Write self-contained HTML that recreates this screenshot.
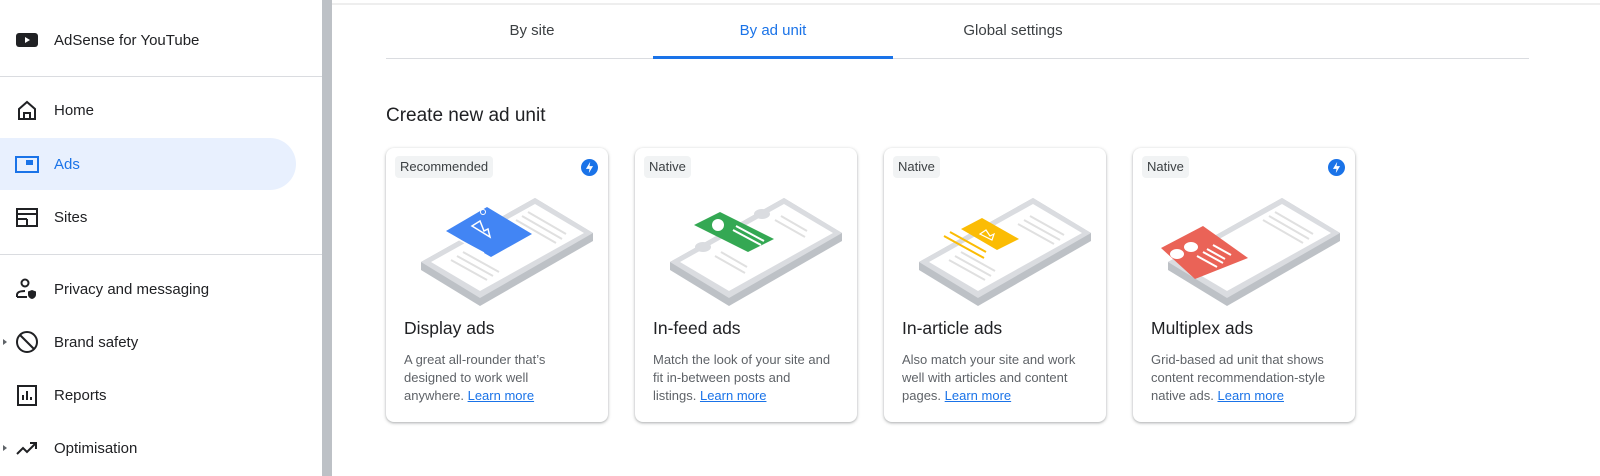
<!DOCTYPE html>
<html><head><meta charset="utf-8"><style>
*{margin:0;padding:0;box-sizing:border-box}
body{width:1600px;height:476px;overflow:hidden;background:#fff;font-family:"Liberation Sans",Arial,sans-serif;color:#202124;position:relative}
.side{position:absolute;left:0;top:0;width:322px;height:476px;background:#fff}
.bar{position:absolute;left:322px;top:0;width:10px;height:476px;background:#bdc1c6}
.item{position:absolute;left:0;height:52px;width:296px;display:flex;align-items:center;font-size:15px;color:#202124}
.item .ic{position:absolute;left:15px;top:50%;transform:translateY(-50%);width:24px;height:24px}
.item span{position:absolute;left:54px}
.sel{background:#e8f0fe;border-radius:0 26px 26px 0;color:#1a73e8}
.hr{position:absolute;left:0;width:322px;height:1px;background:#dadce0}
.arrow{position:absolute;left:3px;width:0;height:0;border-top:3px solid transparent;border-bottom:3px solid transparent;border-left:4px solid #5f6368}
.topline{position:absolute;left:332px;right:0;top:3px;height:2px;background:#eeeeee}
.tabs{position:absolute;left:386px;width:1143px;top:58px;height:1px;background:#dadce0}
.tab{position:absolute;top:22px;font-size:15px;color:#3c4043;width:240px;text-align:center}
.ink{position:absolute;left:653px;top:56px;width:240px;height:3px;background:#1a73e8}
h2{position:absolute;left:386px;top:105px;font-size:19px;font-weight:400;color:#202124}
.card{position:absolute;top:148px;width:222px;height:274px;border-radius:8px;background:#fff;box-shadow:0 1px 2px rgba(60,64,67,.3),0 1px 3px 1px rgba(60,64,67,.12)}
.chip{position:absolute;left:9px;top:8px;height:22px;padding:0 5px;background:#f1f3f4;border-radius:4px;font-size:13px;line-height:22px;color:#3c4043}
.bolt{position:absolute;right:10px;top:11px;width:17px;height:17px}
.card svg.ill{position:absolute;left:0;top:40px}
.t{position:absolute;left:18px;top:170px;font-size:17.5px;color:#202124}
.d{position:absolute;left:18px;top:203px;width:182px;font-size:13px;line-height:18px;color:#5f6368}
.d a{color:#1a73e8;text-decoration:underline}
</style></head><body>
<div class="side">
 <div class="item" style="top:14px"><svg class="ic" viewBox="0 0 24 24"><rect x="1" y="5" width="22" height="14" rx="3" fill="#202124"/><path d="M10 9l5 3-5 3z" fill="#fff"/></svg><span>AdSense for YouTube</span></div>
 <div class="hr" style="top:76px"></div>
 <div class="item" style="top:84px"><svg class="ic" viewBox="0 0 24 24"><path d="M4 11l8-7 8 7v10H4z M9 21v-6h6v6" fill="none" stroke="#202124" stroke-width="2"/></svg><span>Home</span></div>
 <div class="item sel" style="top:138px"><svg class="ic" viewBox="0 0 24 24"><rect x="1" y="5" width="22" height="15" fill="none" stroke="#1a73e8" stroke-width="2"/><rect x="11" y="8" width="7" height="5" fill="#1a73e8"/></svg><span>Ads</span></div>
 <div class="item" style="top:191px"><svg class="ic" viewBox="0 0 24 24"><rect x="2" y="4" width="20" height="17" fill="none" stroke="#202124" stroke-width="2"/><path d="M2 9h20M2 14h10M12 14v7" stroke="#202124" stroke-width="2"/></svg><span>Sites</span></div>
 <div class="hr" style="top:254px"></div>
 <div class="item" style="top:263px"><svg class="ic" viewBox="0 0 24 24"><circle cx="10" cy="6" r="3.5" fill="none" stroke="#202124" stroke-width="2"/><path d="M2 20v-2c0-3 4-4 8-4" fill="none" stroke="#202124" stroke-width="2"/><path d="M2 20h10" stroke="#202124" stroke-width="2"/><path d="M17 13l4 1.5v3c0 2.5-2 4-4 4.5-2-.5-4-2-4-4.5v-3z" fill="#202124"/></svg><span>Privacy and messaging</span></div>
 <div class="arrow" style="top:339px"></div>
 <div class="item" style="top:316px"><svg class="ic" viewBox="0 0 24 24"><circle cx="12" cy="12" r="10" fill="none" stroke="#202124" stroke-width="2"/><path d="M5 5l14 14" stroke="#202124" stroke-width="2"/></svg><span>Brand safety</span></div>
 <div class="item" style="top:369px"><svg class="ic" viewBox="0 0 24 24"><rect x="3" y="3" width="18" height="19" fill="none" stroke="#202124" stroke-width="2"/><path d="M8 17v-5M12 17V8M16 17v-3" stroke="#202124" stroke-width="2"/></svg><span>Reports</span></div>
 <div class="arrow" style="top:445px"></div>
 <div class="item" style="top:422px"><svg class="ic" viewBox="0 0 24 24"><path d="M2 18l6-6 4 4 8-8M15 7h6v6" fill="none" stroke="#202124" stroke-width="2"/></svg><span>Optimisation</span></div>
</div>
<div class="bar"></div>
<div class="topline"></div>
<div class="tab" style="left:412px">By site</div>
<div class="tab" style="left:653px;color:#1a73e8">By ad unit</div>
<div class="tab" style="left:893px">Global settings</div>
<div class="tabs"></div>
<div class="ink"></div>
<h2>Create new ad unit</h2>

<div class="card" style="left:386px">
 <div class="chip">Recommended</div>
 <svg class="bolt" viewBox="0 0 24 24"><circle cx="12" cy="12" r="12" fill="#1a73e8"/><path d="M13 4l-6 10h5l-1 6 6-10h-5z" fill="#fff"/></svg>
 <svg class="ill" width="222" height="120" viewBox="0 40 222 120">
  <path d="M35 114 L149 50 L207 85 L207 93 L94 158 L35 122Z" fill="#bdc1c6"/>
  <path d="M35 114 L149 50 L207 85 L94 150Z" fill="#dadce0"/>
  <path d="M45 114 L149 56 L198 85 L94 143Z" fill="#fff"/>
  <g stroke="#e0e0e0" stroke-width="2"><path d="M130 72l40 23M136 68l40 23M142 64l38 22M65 112l36 20M71 108l36 20M77 104l36 20"/></g>
  <path d="M60 83 L101 59 L146 86 L105 109Z" fill="#4285f4"/>
  <path d="M68 89l30 16M86 78l8-5 4 10 4-2 2 8z" fill="none" stroke="#fff" stroke-width="1.5"/><circle cx="97" cy="64" r="2.5" fill="none" stroke="#fff"/>
 </svg>
 <div class="t">Display ads</div>
 <div class="d">A great all-rounder that’s designed to work well anywhere. <a>Learn more</a></div>
</div>

<div class="card" style="left:635px">
 <div class="chip">Native</div>
 <svg class="ill" width="222" height="120" viewBox="0 40 222 120">
  <path d="M35 114 L149 50 L207 85 L207 93 L94 158 L35 122Z" fill="#bdc1c6"/>
  <path d="M35 114 L149 50 L207 85 L94 150Z" fill="#dadce0"/>
  <path d="M45 114 L149 56 L198 85 L94 143Z" fill="#fff"/>
  <ellipse cx="127" cy="66" rx="8" ry="5" fill="#dadce0"/><ellipse cx="68" cy="99" rx="8" ry="5" fill="#dadce0"/>
  <g stroke="#e0e0e0" stroke-width="2"><path d="M140 72l30 17M146 68l26 15M80 108l30 17M86 104l26 15"/></g>
  <path d="M59 77 L85 64 L139 91 L113 104Z" fill="#34a853"/>
  <circle cx="83" cy="77" r="6" fill="#fff"/>
  <path d="M98 82l28 15M101 78l28 15" stroke="#fff" stroke-width="2"/>
 </svg>
 <div class="t">In-feed ads</div>
 <div class="d">Match the look of your site and fit in-between posts and listings. <a>Learn more</a></div>
</div>

<div class="card" style="left:884px">
 <div class="chip">Native</div>
 <svg class="ill" width="222" height="120" viewBox="0 40 222 120">
  <path d="M35 114 L149 50 L207 85 L207 93 L94 158 L35 122Z" fill="#bdc1c6"/>
  <path d="M35 114 L149 50 L207 85 L94 150Z" fill="#dadce0"/>
  <path d="M45 114 L149 56 L198 85 L94 143Z" fill="#fff"/>
  <g stroke="#e0e0e0" stroke-width="2"><path d="M140 72l36 20M146 68l34 19M134 76l36 20M65 112l36 20M71 108l36 20M77 104l34 19"/></g>
  <path d="M77 81 L98 70 L135 91 L113 102Z" fill="#fbbc04"/>
  <path d="M60 88l40 22M66 84l36 20" stroke="#fbbc04" stroke-width="2"/>
  <path d="M96 86l6-4 4 6 4-2-2 6z" fill="none" stroke="#fff" stroke-width="1.2"/>
 </svg>
 <div class="t">In-article ads</div>
 <div class="d">Also match your site and work well with articles and content pages. <a>Learn more</a></div>
</div>

<div class="card" style="left:1133px">
 <div class="chip">Native</div>
 <svg class="bolt" viewBox="0 0 24 24"><circle cx="12" cy="12" r="12" fill="#1a73e8"/><path d="M13 4l-6 10h5l-1 6 6-10h-5z" fill="#fff"/></svg>
 <svg class="ill" width="222" height="120" viewBox="0 40 222 120">
  <path d="M35 114 L149 50 L207 85 L207 93 L94 158 L35 122Z" fill="#bdc1c6"/>
  <path d="M35 114 L149 50 L207 85 L94 150Z" fill="#dadce0"/>
  <path d="M45 114 L149 56 L198 85 L94 143Z" fill="#fff"/>
  <g stroke="#e0e0e0" stroke-width="2"><path d="M130 72l40 23M136 68l40 23M142 64l38 22"/></g>
  <path d="M28 100 L70 78 L115 110 L62 131Z" fill="#ea6357"/>
  <ellipse cx="58" cy="99" rx="7" ry="5" fill="#fff"/><ellipse cx="44" cy="106" rx="7" ry="5" fill="#fff"/>
  <path d="M74 101l18 10M80 97l18 10M64 108l20 11M70 104l20 11" stroke="#fff" stroke-width="2"/>
 </svg>
 <div class="t">Multiplex ads</div>
 <div class="d">Grid-based ad unit that shows content recommendation-style native ads. <a>Learn more</a></div>
</div>
</body></html>
